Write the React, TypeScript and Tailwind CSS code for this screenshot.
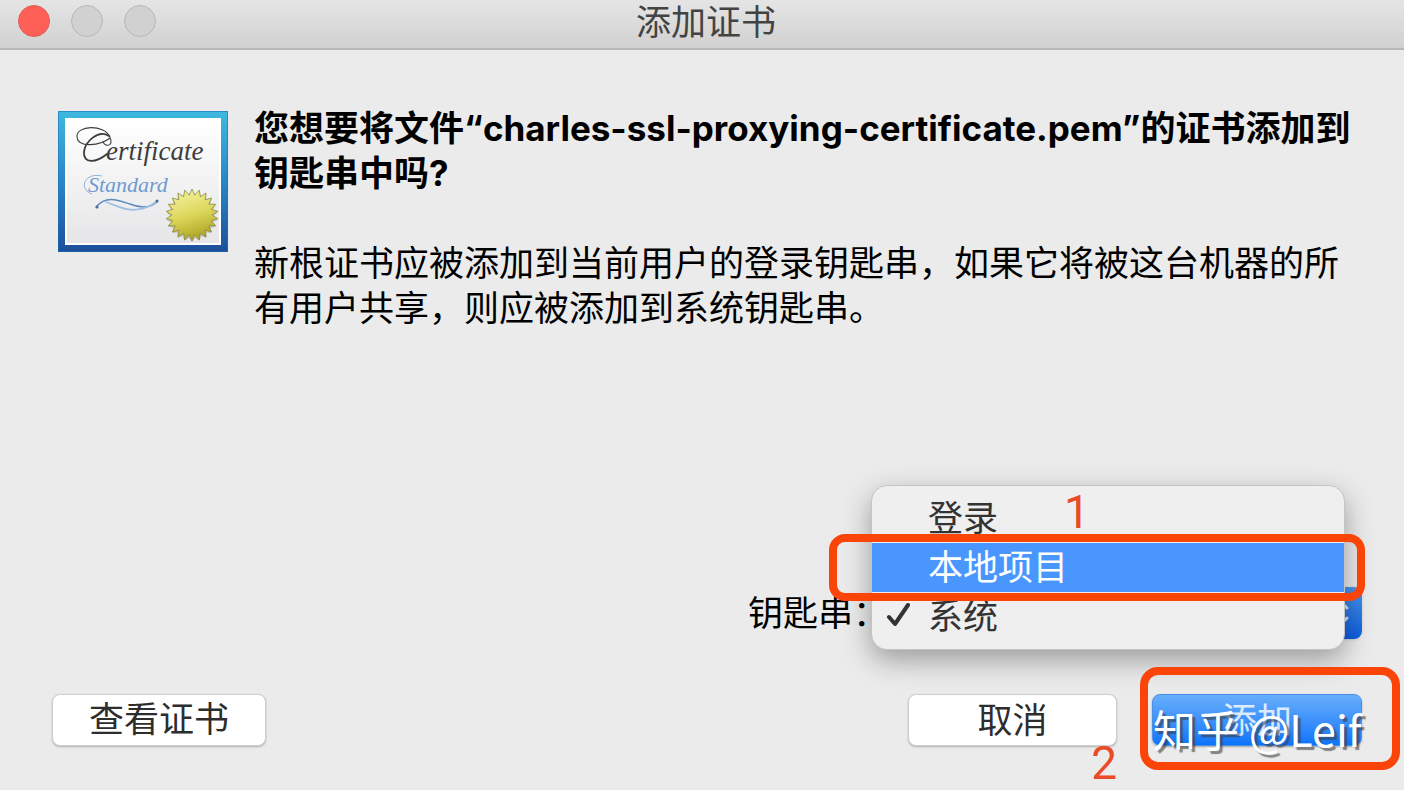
import { useState } from 'react';
import type { ReactNode } from 'react';

type Keychain = 'login' | 'local' | 'system';

const keychains: { id: Keychain; label: string }[] = [
  { id: 'login', label: '登录' },
  { id: 'local', label: '本地项目' },
  { id: 'system', label: '系统' },
];

const SEAL_TEETH = 22;

function buildSealPoints(cx: number, cy: number, outer: number, inner: number) {
  return Array.from({ length: SEAL_TEETH * 2 }, (_, i) => {
    const radius = i % 2 === 0 ? outer : inner;
    const angle = (Math.PI * i) / SEAL_TEETH - Math.PI / 2;
    return `${(cx + radius * Math.cos(angle)).toFixed(1)},${(cy + radius * Math.sin(angle)).toFixed(1)}`;
  }).join(' ');
}

function CertificateIcon() {
  return (
    <svg viewBox="0 0 170 141" className="mt-[5px] h-[141px] w-[170px] shrink-0" aria-hidden="true">
      <defs>
        <linearGradient id="frame" x1="0" y1="0" x2="0" y2="1">
          <stop offset="0" stopColor="#3fb9e0" />
          <stop offset="0.5" stopColor="#2a86c6" />
          <stop offset="1" stopColor="#1c4f9c" />
        </linearGradient>
        <linearGradient id="paper" x1="0" y1="0" x2="0" y2="1">
          <stop offset="0" stopColor="#ffffff" />
          <stop offset="1" stopColor="#e6e6e8" />
        </linearGradient>
        <linearGradient id="seal" x1="0.3" y1="0" x2="0.6" y2="1">
          <stop offset="0" stopColor="#f6f3a0" />
          <stop offset="0.5" stopColor="#dcd75c" />
          <stop offset="1" stopColor="#a9a01c" />
        </linearGradient>
      </defs>
      <rect width="170" height="141" fill="url(#frame)" />
      <rect x="0.5" y="0.5" width="169" height="140" fill="none" stroke="#1f6fae" strokeOpacity="0.6" />
      <rect x="7" y="7" width="156" height="127" fill="#ffffff" />
      <rect x="9" y="9" width="152" height="123" fill="url(#paper)" />
      <g fill="none" stroke="#3d3d40" strokeLinecap="round">
        <path d="M52 26 C46 13 18 14 19 26 C20 37 42 35 52 27" strokeWidth="1.1" />
        <path d="M52 27 C56 34 48 37 45 31" strokeWidth="1.1" />
        <path d="M51 25 C40 18 27 31 26 41 C25 53 38 52 49 43" strokeWidth="1.8" />
      </g>
      <text x="48" y="49" fontSize="27" fontStyle="italic" fill="#3d3d40" fontFamily='"Liberation Serif", serif'>
        ertificate
      </text>
      <text x="30" y="81" fontSize="22" fontStyle="italic" fill="#6f9bcf" fontFamily='"Liberation Serif", serif'>
        Standard
      </text>
      <path d="M44 65 C26 61 20 78 34 83" fill="none" stroke="#8db2dc" strokeWidth="1" />
      <path d="M38 96 C48 84 60 89 72 93 C84 98 92 97 99 91" fill="none" stroke="#5c88bd" strokeWidth="1.4" />
      <path d="M48 91 C60 95 70 101 82 98 C88 97 94 94 98 91" fill="none" stroke="#9cbfe6" strokeWidth="1.8" />
      <circle cx="39" cy="96" r="1.6" fill="#4d6f9c" />
      <circle cx="99" cy="90" r="1.6" fill="#4d6f9c" />
      <polygon points={buildSealPoints(134, 105, 26, 22)} fill="#55552a" opacity="0.25" />
      <polygon
        points={buildSealPoints(134, 104, 26, 20)}
        fill="url(#seal)"
        stroke="#8d8a3c"
        strokeWidth="0.8"
      />
    </svg>
  );
}

function DialogButton({ children, className }: { children: ReactNode; className: string }) {
  return (
    <button
      type="button"
      className={`h-[52px] rounded-lg border border-[#cfcfcf] bg-white leading-none text-[#2d2d2d] shadow-[0_1px_2px_rgba(0,0,0,0.25)] ${className}`}
    >
      {children}
    </button>
  );
}

export default function App() {
  const [selected, setSelected] = useState<Keychain>('system');
  const [active, setActive] = useState<Keychain>('local');

  return (
    <div className="flex min-h-screen flex-col overflow-hidden bg-[#ebebeb] font-[Inter,'Noto_Sans_CJK_SC',sans-serif] text-[35px] text-black">
      <header className="relative flex h-[50px] items-center justify-center border-b-2 border-[#b8b8b8] bg-linear-to-b from-[#e5e5e5] to-[#d1d1d1] pb-1 pl-2">
        <div className="absolute top-[5px] left-[18px] flex gap-[21px]">
          <button type="button" aria-label="关闭" className="size-8 rounded-full border border-[#dd5f57] bg-[#fe5f57]" />
          <button type="button" aria-label="最小化" className="size-8 rounded-full border border-[#b8b8b8] bg-[#d1d1d1]" />
          <button type="button" aria-label="缩放" className="size-8 rounded-full border border-[#b8b8b8] bg-[#d1d1d1]" />
        </div>
        <h1 className="leading-none text-[#434343]">添加证书</h1>
      </header>

      <main className="flex flex-1 flex-col pt-14 pb-11">
        <section className="flex gap-[26px] pr-8 pl-[58px] leading-[45px]">
          <CertificateIcon />
          <div className="min-w-0 flex-1">
            <h2 className="font-bold">
              您想要将文件“charles-ssl-proxying-certificate.pem”的证书添加到钥匙串中吗?
            </h2>
            <p className="mt-[45px]">
              新根证书应被添加到当前用户的登录钥匙串，如果它将被这台机器的所有用户共享，则应被添加到系统钥匙串。
            </p>
          </div>
        </section>

        <div className="mt-auto flex items-center justify-end pr-[42px]">
          <label htmlFor="keychain" className="w-[124px] leading-[52px] whitespace-nowrap">
            钥匙串：
          </label>
          <div className="relative w-[490px]">
            <select
              id="keychain"
              value={selected}
              onChange={(e) => setSelected(e.target.value as Keychain)}
              className="block h-[52px] w-full appearance-none rounded-lg bg-white px-14 shadow-sm"
            >
              {keychains.map((item) => (
                <option key={item.id} value={item.id}>
                  {item.label}
                </option>
              ))}
            </select>
            <span className="pointer-events-none absolute inset-y-0 right-0 flex w-10 items-center justify-center rounded-r-lg bg-linear-to-b from-[#4a96ee] to-[#0a5ce0]">
              <svg viewBox="0 0 20 32" className="h-8 w-5" fill="none" stroke="#dceaff" strokeWidth="3" strokeLinecap="round">
                <path d="M3 11 L9 5 L15 11 M3 21 L9 27 L15 21" />
              </svg>
            </span>

            <ul
              role="listbox"
              aria-label="钥匙串"
              className="absolute -top-[102px] right-[17px] -left-px rounded-2xl border border-[#c4c4c4] bg-[#efefef] py-2 text-[#333333] shadow-[0_10px_28px_rgba(0,0,0,0.34)]"
            >
              {keychains.map((item) => (
                <li key={item.id} role="option" aria-selected={item.id === selected} className="relative">
                  <button
                    type="button"
                    onMouseEnter={() => setActive(item.id)}
                    onClick={() => setSelected(item.id)}
                    className={`flex h-[49px] w-full items-center pl-14 leading-none ${
                      item.id === active ? 'bg-[#4a96ff] text-white' : ''
                    }`}
                  >
                    {item.id === selected && (
                      <svg
                        viewBox="0 0 24 26"
                        className="absolute left-[14px] h-[26px] w-6"
                        fill="none"
                        stroke="currentColor"
                        strokeWidth="4"
                        strokeLinecap="round"
                        strokeLinejoin="round"
                      >
                        <path d="M3 14 L9 21 L22 2" />
                      </svg>
                    )}
                    {item.label}
                  </button>
                  {item.id === 'local' && (
                    <span className="pointer-events-none absolute -top-[9px] -right-[21px] -bottom-[9px] -left-[43px] z-10 rounded-2xl border-8 border-[#fb4407]" />
                  )}
                </li>
              ))}
              <li aria-hidden="true" className="absolute top-0 left-48 font-[Roboto,sans-serif] text-[46px] leading-[52px] text-[#e94b27]">
                1
              </li>
            </ul>
          </div>
        </div>

        <footer className="mt-[55px] flex pr-[42px] pl-[52px]">
          <DialogButton className="w-[214px]">查看证书</DialogButton>
          <div className="relative ml-auto">
            <DialogButton className="w-[209px]">取消</DialogButton>
            <span className="absolute top-[46px] right-0 font-[Roboto,sans-serif] text-[46px] leading-[46px] text-[#e94b27]">
              2
            </span>
          </div>
          <div className="relative ml-[35px]">
            <button
              type="button"
              className="h-[52px] w-[210px] rounded-lg border border-[#4a90e8] bg-linear-to-b from-[#66aefb] to-[#0a73fb] leading-none text-white/80 shadow-[0_1px_2px_rgba(0,0,0,0.3)]"
            >
              添加
            </button>
            <span className="pointer-events-none absolute -top-[27px] -right-[38px] -bottom-[24px] -left-3 rounded-[18px] border-8 border-[#fb4407]" />
            <span className="pointer-events-none absolute top-2 left-px font-['Noto_Sans_CJK_SC',sans-serif] text-[43px] leading-[52px] whitespace-nowrap text-white [text-shadow:3px_3px_1px_rgba(60,60,60,0.6)]">
              知乎 @Leif
            </span>
          </div>
        </footer>
      </main>
    </div>
  );
}
